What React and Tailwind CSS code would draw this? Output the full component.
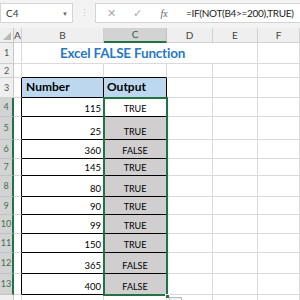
import React from 'react'

const cols = ['A', 'B', 'C', 'D', 'E', 'F']

const data = [
  { n: 4, h: 'h-[19px]', num: 115, out: 'TRUE' },
  { n: 5, h: 'h-[23px]', num: 25, out: 'TRUE' },
  { n: 6, h: 'h-[19px]', num: 360, out: 'FALSE' },
  { n: 7, h: 'h-[17px]', num: 145, out: 'TRUE' },
  { n: 8, h: 'h-[21px]', num: 80, out: 'TRUE' },
  { n: 9, h: 'h-[18px]', num: 90, out: 'TRUE' },
  { n: 10, h: 'h-[19px]', num: 99, out: 'TRUE' },
  { n: 11, h: 'h-[19px]', num: 150, out: 'TRUE' },
  { n: 12, h: 'h-[21px]', num: 365, out: 'FALSE' },
  { n: 13, h: 'h-[21px]', num: 400, out: 'FALSE' }
]

const grid = 'border-r border-b border-[#dadada]'

function RowHead({ n, h, selected }) {
  return (
    <div
      className={
        h + ' w-[14px] flex items-center justify-center text-[9px] border-b ' +
        (selected
          ? 'bg-[#d3d3d3] text-[#3f6e52] border-[#c2c2c2] border-r-2 border-r-[#217346]'
          : 'bg-[#efefef] text-[#555] border-[#d0d0d0] border-r border-r-[#c8c8c8]')
      }
    >
      {n}
    </div>
  )
}

function Blank({ className }) {
  return <div className={grid + ' ' + className}></div>
}

export default function App() {
  return (
    <div className="w-[300px] h-[300px] overflow-hidden bg-white font-['Lato',sans-serif] relative">
      {/* formula bar */}
      <div className="h-[28px] bg-[#f3f3f3] flex items-start pt-[3px]">
        <div className="shrink-0 w-[73px] h-[20px] bg-white border border-[#d4d4d4] flex items-center justify-between pl-[5px] pr-[4px] text-[10px] text-[#333]">
          <span>C4</span>
          <span className="text-[6px] text-[#666]">▼</span>
        </div>
        <div className="shrink-0 w-[22px] h-[20px] flex items-center justify-center text-[#bbb] text-[9px]">⋮</div>
        <div className="flex-1 min-w-0 h-[20px] bg-white border border-[#d4d4d4] border-r-0 flex items-center text-[#999] overflow-hidden">
          <span className="shrink-0 w-[30px] text-center text-[11px] text-[#aaa]">✕</span>
          <span className="shrink-0 w-[22px] text-center text-[11px] text-[#aaa]">✓</span>
          <span className="shrink-0 w-[32px] text-center text-[10px] italic font-['Liberation_Serif',serif] text-[#666]">fx</span>
          <span className="shrink-0 pl-[6px] text-[10px] text-[#222] tracking-[-0.3px] whitespace-nowrap">=IF(NOT(B4&gt;=200),TRUE)</span>
        </div>
      </div>

      {/* sheet */}
      <div className="grid grid-cols-[14px_8px_82px_63px_46px_45px_1fr]">
        {/* column headers */}
        <div className="h-[15px] bg-[#efefef] border-r border-b border-[#c8c8c8] flex items-end justify-end p-[2px]">
          <div className="w-0 h-0 border-l-[8px] border-l-transparent border-b-[8px] border-b-[#b9b9b9]"></div>
        </div>
        {cols.map((c) => (
          <div
            key={c}
            className={
              'h-[15px] flex items-center justify-center text-[10px] ' +
              (c === 'C'
                ? 'bg-[#d3d3d3] text-[#2f5f43] border-r border-[#c2c2c2] border-b-2 border-b-[#217346]'
                : 'bg-[#efefef] text-[#444] border-r border-b border-[#d0d0d0]')
            }
          >
            {c}
          </div>
        ))}

        {/* row 1 */}
        <RowHead n={1} h="h-[21px]" />
        <Blank className="h-[21px]" />
        <div className="h-[21px] col-span-4 border-b border-r border-[#dadada] flex items-center pl-[38px] text-[13.5px] font-bold text-[#2878c4] whitespace-nowrap tracking-[-0.2px]">
          Excel FALSE Function
        </div>
        <Blank className="h-[21px]" />

        {/* row 2 */}
        <RowHead n={2} h="h-[14px]" />
        <Blank className="h-[14px]" />
        <div className="h-[14px] border-r border-b border-[#dadada] border-b-black"></div>
        <div className="h-[14px] border-r border-b border-[#dadada] border-b-black"></div>
        <Blank className="h-[14px]" />
        <Blank className="h-[14px]" />
        <Blank className="h-[14px]" />

        {/* row 3 */}
        <RowHead n={3} h="h-[20px]" />
        <div className="h-[20px] border-b border-[#dadada] border-r border-r-black"></div>
        <div className="h-[20px] bg-[#bdd7ee] border-r border-b border-black flex items-end pl-[4px] pb-[1px] text-[12px] font-bold text-black">
          Number
        </div>
        <div className="h-[20px] bg-[#bdd7ee] border-r border-b border-black flex items-end pl-[3px] pb-[1px] text-[12px] font-bold text-black">
          Output
        </div>
        <Blank className="h-[20px]" />
        <Blank className="h-[20px]" />
        <Blank className="h-[20px]" />

        {data.map((r) => (
          <React.Fragment key={r.n}>
            <RowHead n={r.n} h={r.h} selected />
            <div className={r.h + ' border-b border-[#dadada] border-r border-r-black'}></div>
            <div className={r.h + ' bg-white border-r border-b border-black flex items-end justify-end pr-[2px] text-[9.5px] text-black leading-[14px]'}>
              {r.num}
            </div>
            <div
              className={
                r.h + ' border-r border-b border-black flex items-end justify-center text-[9px] text-black leading-[14px] ' +
                (r.n === 4 ? 'bg-white' : 'bg-[#d0cece]')
              }
            >
              {r.out}
            </div>
            <Blank className={r.h} />
            <Blank className={r.h} />
            <Blank className={r.h} />
          </React.Fragment>
        ))}

        {/* row 14, mostly off screen */}
        <div className="h-[20px] bg-[#efefef] border-r border-[#c8c8c8]"></div>
        <Blank className="h-[20px]" />
        <Blank className="h-[20px]" />
        <Blank className="h-[20px]" />
        <Blank className="h-[20px]" />
        <Blank className="h-[20px]" />
        <Blank className="h-[20px]" />
      </div>

      {/* selection overlay */}
      <div className="absolute left-[103px] top-[97px] w-[65px] h-[199px] border-2 border-[#217346] pointer-events-none"></div>
      <div className="absolute left-[165px] top-[294px] w-[5px] h-[5px] bg-[#217346] border border-white"></div>
      <div className="absolute left-[169px] top-[297px] w-[13px] h-[8px] bg-[#f3f3f3] border border-[#bbb]"></div>
    </div>
  )
}
